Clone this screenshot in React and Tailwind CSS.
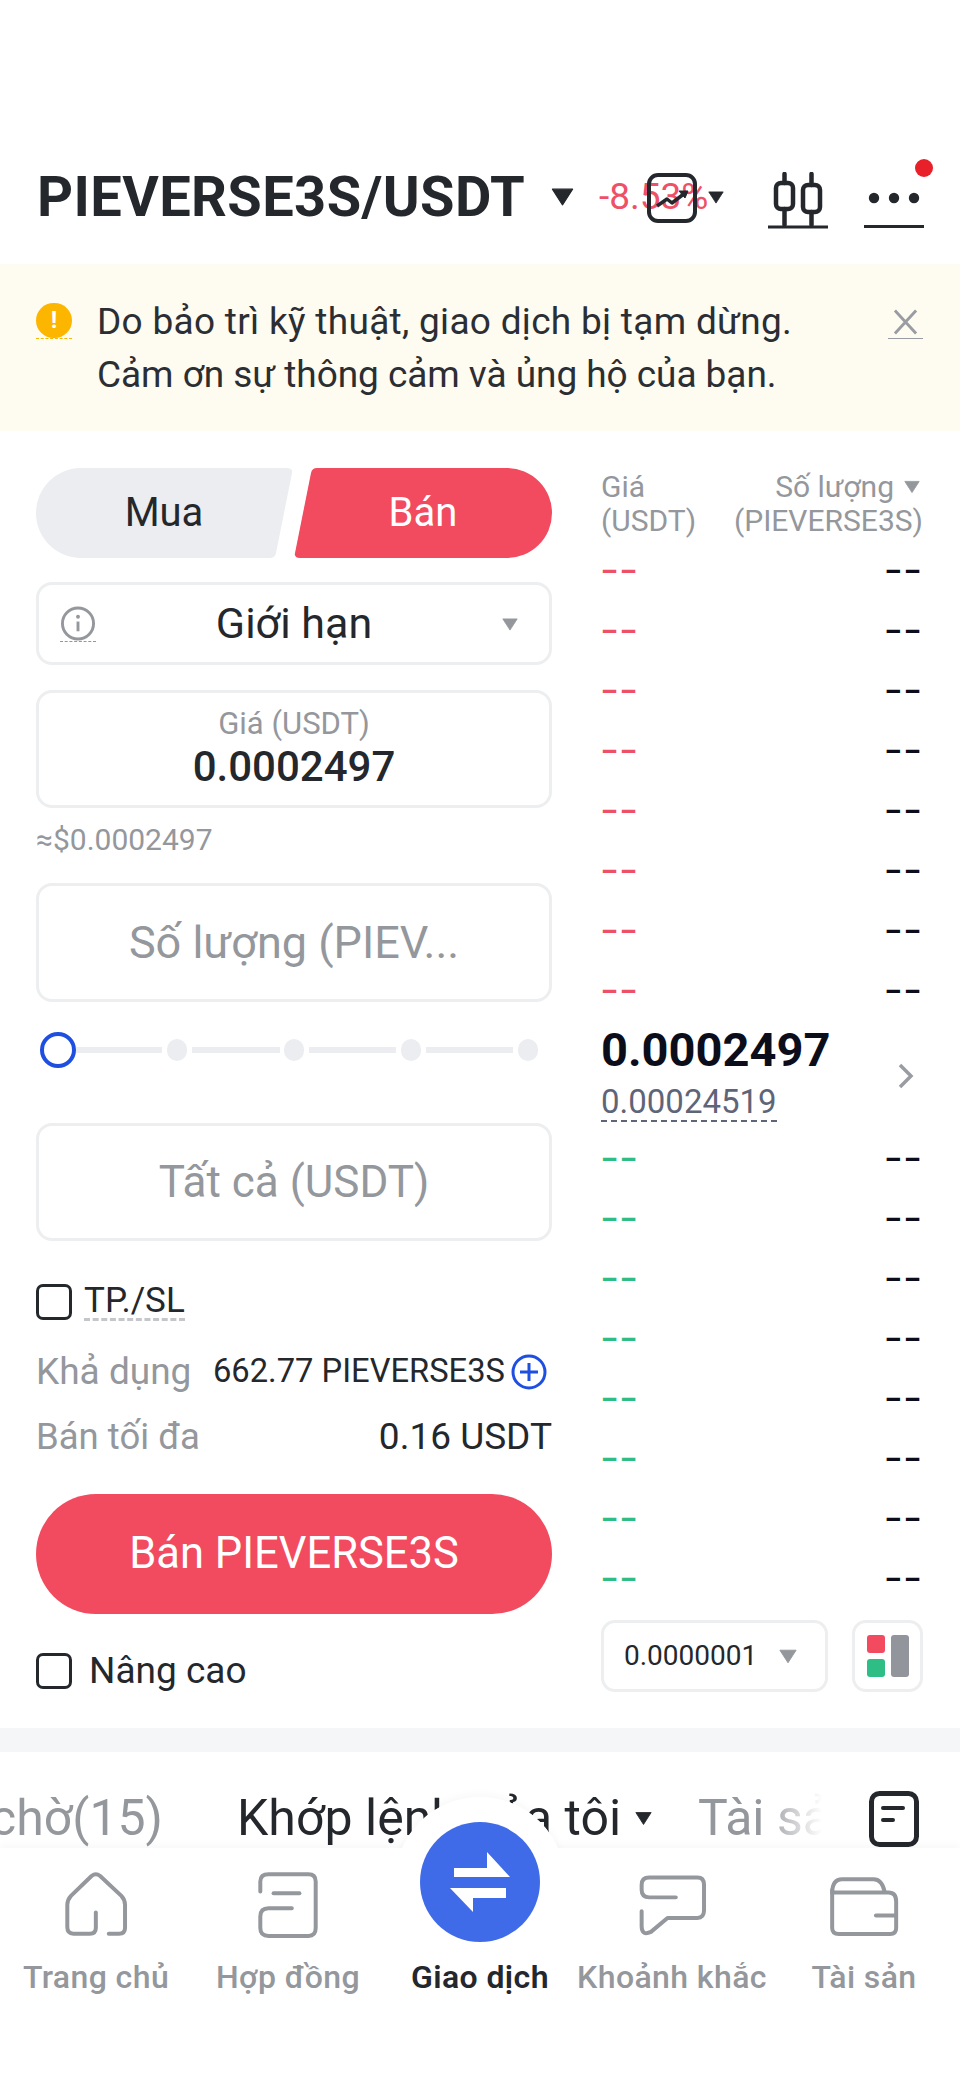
const Tri = ({ className }) => (
  <svg viewBox="0 0 20 16" className={className} aria-hidden="true">
    <path d="M1 1 H19 L10 15 Z" fill="currentColor" stroke="currentColor" strokeWidth="1" strokeLinejoin="round" />
  </svg>
);

const Box = ({ className = "", children }) => (
  <div className={"w-[516px] border-[3px] border-[#eceef0] rounded-[16px] flex flex-col items-center justify-center " + className}>{children}</div>
);

const Check = () => <div className="w-[36px] h-[36px] border-[3px] border-[#24272c] rounded-[7px] shrink-0" />;

const BookRow = ({ color }) => (
  <div className="h-[60px] pt-[3px] flex items-center justify-between text-[26px] font-black tracking-[3px]">
    <span className={color}>––</span>
    <span className="text-[#0b0e1a]">––</span>
  </div>
);

const ROWS = [0, 1, 2, 3, 4, 5, 6, 7];

const NavItem = ({ icon, label, className = "" }) => (
  <div className={"w-[192px] flex flex-col items-center " + className}>
    <div className="h-[90px] flex items-end justify-center">{icon}</div>
    <span className="mt-[19px] text-[32px] leading-[40px] font-medium tracking-[0.4px] text-[#94979c] whitespace-nowrap">{label}</span>
  </div>
);

export default function App() {
  return (
    <div className="relative w-[960px] h-[2079px] overflow-hidden bg-white font-['Roboto',sans-serif] text-[#24272c]">
      {/* header */}
      <div className="pt-[164px] h-[264px]">
        <div className="relative h-[66px] flex items-center pl-[37px]">
          <span className="text-[56px] font-bold leading-none tracking-[0.4px] whitespace-nowrap">PIEVERSE3S/USDT</span>
          <Tri className="ml-[26px] w-[23px] h-[18px] text-[#24272c]" />
          <span className="ml-[25px] text-[37px] text-[#ee5068] whitespace-nowrap">-8.53%</span>
          <Tri className="w-[16px] h-[13px] text-[#24272c]" />
          <svg viewBox="0 0 50 50" className="absolute left-[647px] top-[9px] w-[50px] h-[50px] text-[#24272c]" fill="none" stroke="currentColor">
            <rect x="2" y="2" width="46" height="46" rx="9" strokeWidth="4" />
            <path d="M10 33 L20 26 L25 30 L38 20" strokeWidth="3.5" strokeLinejoin="round" />
            <path d="M32 18 H41 L38 25 Z" fill="currentColor" strokeWidth="1" />
          </svg>
          <svg viewBox="0 0 60 58" className="absolute left-[768px] top-[8px] w-[60px] h-[58px] text-[#24272c]" fill="none" stroke="currentColor">
            <path d="M16.5 2 V11 M16.5 37 V53 M43.5 2 V13 M43.5 40 V53" strokeWidth="4.5" strokeLinecap="round" />
            <rect x="8" y="11" width="17" height="26" rx="5" strokeWidth="4.5" />
            <rect x="35" y="13" width="17" height="27" rx="5" strokeWidth="4.5" />
            <path d="M0 55 H60" strokeWidth="3" />
          </svg>
          <svg viewBox="0 0 60 58" className="absolute left-[864px] top-[8px] w-[60px] h-[58px] text-[#24272c]" fill="currentColor">
            <circle cx="10" cy="26" r="5.2" />
            <circle cx="30" cy="26" r="5.2" />
            <circle cx="50" cy="26" r="5.2" />
            <rect x="0" y="53" width="60" height="3" />
          </svg>
          <div className="absolute left-[915px] top-[-5px] w-[18px] h-[18px] rounded-full bg-[#e8202a]" />
        </div>
      </div>

      {/* notice */}
      <div className="h-[167px] bg-[#fefbf1] pl-[36px] pr-[37px] flex items-start">
        <div className="mt-[39px] w-[36px] h-[36px] border-b border-dashed border-[#f5b800] shrink-0">
          <div className="w-[36px] h-[35px] rounded-full bg-[#fdb600] text-white text-[24px] font-bold leading-[35px] text-center">!</div>
        </div>
        <div className="ml-[25px] pt-[31px] text-[37px] leading-[53px] text-[#2b2e33] whitespace-nowrap flex-1">
          <div className="tracking-[0.3px]">Do bảo trì kỹ thuật, giao dịch bị tạm dừng.</div>
          <div className="tracking-[-0.05px]">Cảm ơn sự thông cảm và ủng hộ của bạn.</div>
        </div>
        <div className="mt-[44px] w-[35px] h-[31px] border-b border-[#9a9ca3] shrink-0 flex justify-center">
          <svg viewBox="0 0 26 28" className="w-[25px] h-[28px] text-[#9a9ca3]" fill="none" stroke="currentColor" strokeWidth="3">
            <path d="M2 2 L24 26 M24 2 L2 26" />
          </svg>
        </div>
      </div>

      {/* trade panel */}
      <div className="h-[1297px] flex pl-[36px] pr-[37px]">
        {/* form */}
        <div className="w-[516px] pt-[37px] shrink-0">
          <div className="relative h-[90px]">
            <svg viewBox="0 0 516 90" className="absolute inset-0 w-[516px] h-[90px]">
              <path d="M45 0 H251 Q257 0 256 5 L240 85 Q239 90 234 90 H45 A45 45 0 0 1 45 0 Z" fill="#ebedf0" />
              <path d="M281 0 H471 A45 45 0 0 1 471 90 H264 Q258 90 259 85 L275 5 Q276 0 281 0 Z" fill="#f24a5f" />
            </svg>
            <div className="relative h-full flex items-center text-[40px]">
              <span className="w-[256px] text-center">Mua</span>
              <span className="w-[260px] text-center pl-[2px] text-white">Bán</span>
            </div>
          </div>

          <div className="relative mt-[24px] h-[83px] w-[516px] border-[3px] border-[#eceef0] rounded-[16px] flex items-center justify-center">
            <div className="absolute left-[21px] top-[21px] w-[36px] h-[36px] border-b border-dashed border-[#94979c]">
              <svg viewBox="0 0 36 36" className="w-[36px] h-[35px] text-[#94979c]" fill="none" stroke="currentColor">
                <circle cx="18" cy="18" r="16" strokeWidth="3" />
                <path d="M18 16 V26" strokeWidth="3" />
                <circle cx="18" cy="11" r="2" fill="currentColor" stroke="none" />
              </svg>
            </div>
            <span className="text-[43px] font-[450]">Giới hạn</span>
            <Tri className="absolute right-[31px] top-[32px] w-[16px] h-[15px] text-[#94979c]" />
          </div>

          <Box className="mt-[25px] h-[118px]">
            <span className="text-[31px] leading-[36px] text-[#94979c]">Giá (USDT)</span>
            <span className="text-[42px] leading-[50px] font-medium">0.0002497</span>
          </Box>

          <div className="mt-[14px] h-[36px] text-[30px] leading-[36px] text-[#94979c]">≈$0.0002497</div>

          <Box className="mt-[25px] h-[119px]">
            <span className="text-[45px] text-[#94979c]">Số lượng (PIEV...</span>
          </Box>

          {/* slider */}
          <div className="mt-[30px] h-[36px] pl-[4px] flex items-center">
            <div className="w-[36px] h-[36px] rounded-full border-[4px] border-[#1f4fe0] shrink-0" />
            <div className="w-[86px] h-[6px] bg-[#ebedf0]" />
            <div className="ml-[5px] w-[20px] h-[22px] rounded-full bg-[#ebedf0]" />
            <div className="ml-[5px] w-[88px] h-[6px] bg-[#ebedf0]" />
            <div className="ml-[4px] w-[20px] h-[22px] rounded-full bg-[#ebedf0]" />
            <div className="ml-[5px] w-[87px] h-[6px] bg-[#ebedf0]" />
            <div className="ml-[5px] w-[20px] h-[22px] rounded-full bg-[#ebedf0]" />
            <div className="ml-[5px] w-[87px] h-[6px] bg-[#ebedf0]" />
            <div className="ml-[5px] w-[20px] h-[22px] rounded-full bg-[#ebedf0]" />
          </div>

          <Box className="mt-[55px] h-[118px]">
            <span className="text-[44px] text-[#94979c]">Tất cả (USDT)</span>
          </Box>

          <div className="mt-[43px] h-[36px] flex items-center">
            <Check />
            <span className="ml-[12px] text-[35px] leading-[34px] border-b-[3px] border-dashed border-[#c4c6ca]">TP./SL</span>
          </div>

          <div className="mt-[32px] h-[40px] flex items-center whitespace-nowrap">
            <span className="text-[37px] text-[#94979c] w-[177px]">Khả dụng</span>
            <span className="text-[32.7px]">662.77 PIEVERSE3S</span>
            <svg viewBox="0 0 36 36" className="ml-[6px] w-[36px] h-[36px] text-[#1f4fe0]" fill="none" stroke="currentColor" strokeWidth="3">
              <circle cx="18" cy="18" r="16" />
              <path d="M18 9 V27 M9 18 H27" />
            </svg>
          </div>

          <div className="mt-[25px] h-[40px] flex items-center justify-between whitespace-nowrap">
            <span className="text-[36.5px] text-[#94979c]">Bán tối đa</span>
            <span className="text-[37px]">0.16 USDT</span>
          </div>

          <div className="mt-[37px] h-[120px] rounded-full bg-[#f24a5f] flex items-center justify-center text-white text-[43.5px]">
            Bán PIEVERSE3S
          </div>

          <div className="mt-[39px] h-[36px] flex items-center">
            <Check />
            <span className="ml-[17px] text-[37px]">Nâng cao</span>
          </div>
        </div>

        {/* order book */}
        <div className="ml-[49px] w-[322px] pt-[39px]">
          <div className="flex justify-between text-[30px] leading-[34px] text-[#94979c] h-[70px]">
            <div>
              <div>Giá</div>
              <div>(USDT)</div>
            </div>
            <div className="text-right">
              <div className="flex items-center justify-end">
                Số lượng
                <Tri className="ml-[10px] w-[16px] h-[14px] text-[#94979c] mr-[3px]" />
              </div>
              <div>(PIEVERSE3S)</div>
            </div>
          </div>
          {ROWS.map((i) => (
            <BookRow key={i} color="text-[#ee5068]" />
          ))}
          <div className="relative h-[108px]">
            <div className="pt-[5px] text-[47px] leading-[50px] font-bold text-[#0b0e1a]">0.0002497</div>
            <div className="mt-[9px] w-fit text-[33px] leading-[36px] text-[#5f6578] border-b-2 border-dashed border-[#5f6578]">0.00024519</div>
            <svg viewBox="0 0 16 26" className="absolute right-[9px] top-[43px] w-[16px] h-[26px] text-[#9a9ca3]" fill="none" stroke="currentColor" strokeWidth="3.5">
              <path d="M2 2 L13 13 L2 24" />
            </svg>
          </div>
          {ROWS.map((i) => (
            <BookRow key={i} color="text-[#2ebd85]" />
          ))}
          <div className="mt-[12px] flex justify-between">
            <div className="w-[227px] h-[72px] border-[3px] border-[#eceef0] rounded-[14px] flex items-center pl-[20px]">
              <span className="text-[28px]">0.0000001</span>
              <Tri className="ml-[22px] w-[18px] h-[15px] text-[#94979c]" />
            </div>
            <div className="w-[71px] h-[72px] border-[3px] border-[#eceef0] rounded-[14px] flex items-center justify-center gap-[6px]">
              <div className="flex flex-col gap-[6px]">
                <div className="w-[18px] h-[18px] rounded-[3px] bg-[#f24a5f]" />
                <div className="w-[18px] h-[18px] rounded-[3px] bg-[#2ebd85]" />
              </div>
              <div className="w-[18px] h-[42px] rounded-[3px] bg-[#93959d]" />
            </div>
          </div>
        </div>
      </div>

      {/* divider */}
      <div className="h-[24px] bg-[#f5f6f8]" />

      {/* tabs */}
      <div className="relative h-[96px] pt-[36px] flex items-center whitespace-nowrap text-[50px]">
        <div className="w-[163px] overflow-hidden flex justify-end shrink-0 text-[#94979c]">
          <span className="shrink-0">Lệnh chờ(15)</span>
        </div>
        <span className="ml-[74px] font-[450]">Khớp lệnh của tôi</span>
        <Tri className="ml-[14px] w-[17px] h-[15px] text-[#24272c]" />
        <div className="relative ml-[46px] w-[124px] overflow-hidden text-[#94979c]">
          <span>Tài sản</span>
          <div className="absolute inset-y-0 right-0 w-[60px] bg-gradient-to-r from-transparent to-white" />
        </div>
        <svg viewBox="0 0 50 56" className="absolute left-[869px] top-[39px] w-[50px] h-[56px] text-[#24272c]" fill="none" stroke="currentColor">
          <rect x="2.5" y="2.5" width="45" height="51" rx="8" strokeWidth="5" />
          <path d="M14 17 H34 M14 29 H24" strokeWidth="4" strokeLinecap="round" />
        </svg>
      </div>

      {/* bottom nav */}
      <div className="absolute left-0 right-0 top-[1848px] h-[231px] bg-white shadow-[0_-3px_8px_rgba(0,0,0,0.03)]">
        <div className="absolute left-[395px] top-[-51px] w-[170px] h-[170px] rounded-full bg-white shadow-[0_-3px_8px_rgba(0,0,0,0.03)]" />
        <div className="absolute inset-0 bg-white" />
        <div className="absolute left-[395px] top-[-51px] w-[170px] h-[170px] rounded-full bg-white" />
        <div className="absolute left-[420px] top-[-26px] w-[120px] h-[120px] rounded-full bg-[#3f6be8]">
          <svg viewBox="0 0 120 120" className="w-[120px] h-[120px]" fill="#fff">
            <path d="M34 46 H67 V30 L90 55 H34 Z" />
            <path d="M86 76 H53 V90 L30 66 H86 Z" />
          </svg>
        </div>
        <div className="relative h-full flex">
          <NavItem
            icon={
              <svg viewBox="195 450 200 205" className="w-[67px] h-[68px]" fill="none" stroke="#94979c" strokeWidth="12" strokeLinecap="round" strokeLinejoin="round">
                <path d="M293 578 V625 Q293 642 275 642 H225 Q207 642 207 622 V555 Q207 540 218 528 L280 468 Q293 458 306 468 L370 528 Q381 540 381 555 V625 Q381 642 363 642 H332" />
              </svg>
            }
            label="Trang chủ"
          />
          <NavItem
            icon={
              <svg viewBox="775 450 200 205" className="w-[67px] h-[68px]" fill="none" stroke="#94979c" strokeWidth="12" strokeLinecap="round" strokeLinejoin="round">
                <path d="M790 515 V485 Q790 463 815 463 H935 Q957 463 957 485 V625 Q957 649 935 649 H815 Q790 649 790 625 V590 Q790 565 815 565 H885" />
                <path d="M830 520 H908" />
              </svg>
            }
            label="Hợp đồng"
          />
          <NavItem
            icon={<div className="w-[67px] h-[68px]" />}
            label={<span className="text-[#24272c] font-semibold">Giao dịch</span>}
          />
          <NavItem
            icon={
              <svg viewBox="530 460 220 195" className="w-[73px] h-[65px]" fill="none" stroke="#94979c" strokeWidth="12" strokeLinecap="round" strokeLinejoin="round">
                <path d="M650 533 H570 Q547 533 547 510 V495 Q547 473 570 473 H715 Q735 473 735 495 V572 Q735 595 715 595 H625 L575 637 Q547 650 547 620 V575" />
              </svg>
            }
            label="Khoảnh khắc"
          />
          <NavItem
            icon={
              <svg viewBox="1105 465 225 190" className="w-[75px] h-[63px]" fill="none" stroke="#94979c" strokeWidth="12" strokeLinecap="round" strokeLinejoin="round">
                <path d="M1120 520 Q1120 478 1150 478 H1245 Q1270 478 1278 515" />
                <path d="M1120 518 H1290 Q1313 518 1313 545 V625 Q1313 643 1295 643 H1140 Q1120 643 1120 625 V510" />
                <path d="M1312 587 H1252" />
              </svg>
            }
            label="Tài sản"
          />
        </div>
      </div>
    </div>
  );
}
